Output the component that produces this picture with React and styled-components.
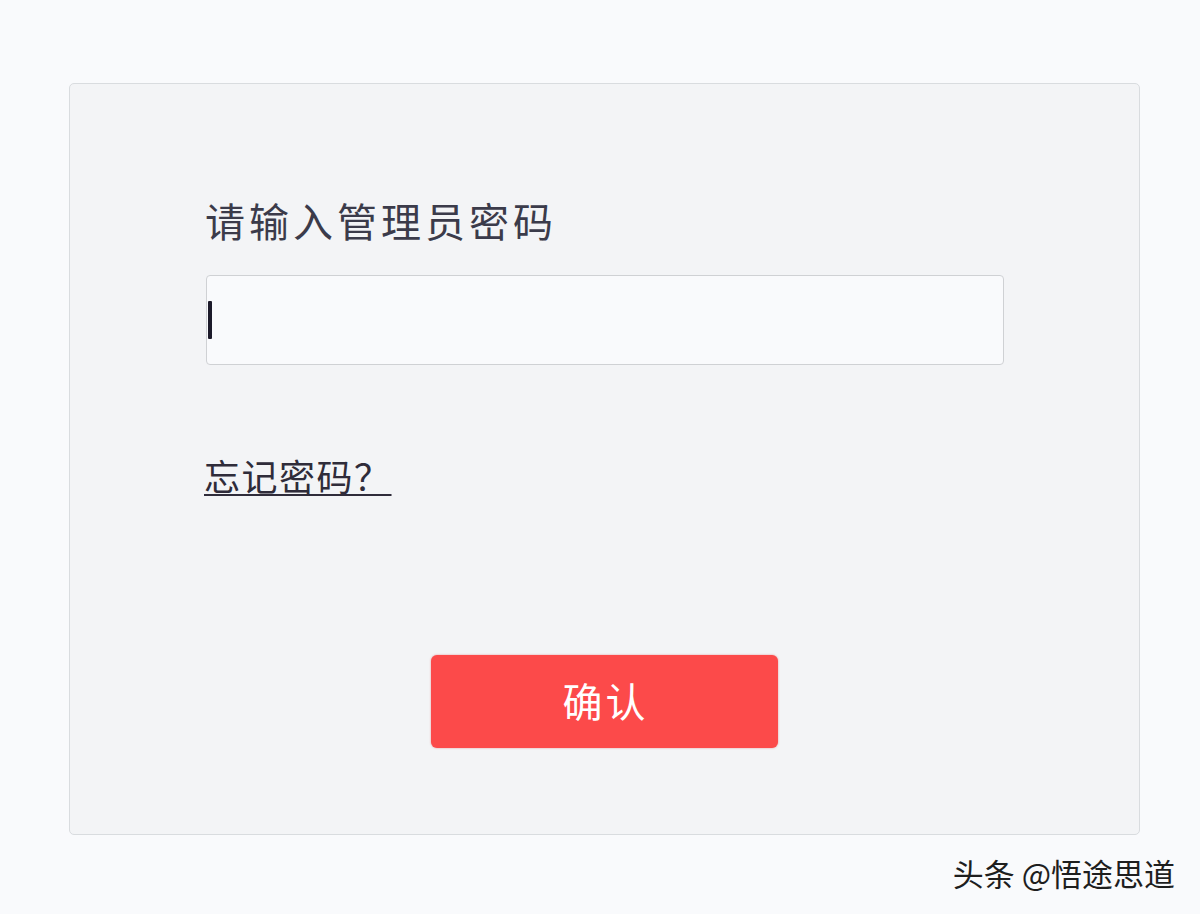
import styled, { createGlobalStyle } from 'styled-components'

const GlobalStyle = createGlobalStyle`
  html, body {
    margin: 0;
    padding: 0;
    background: #f9fafc;
    font-family: "Noto Sans CJK SC", "Liberation Sans", sans-serif;
  }
`

const Page = styled.div`
  width: 1200px;
  height: 914px;
  box-sizing: border-box;
  padding: 83px 60px 0 69px;
  display: flex;
  flex-direction: column;
`

const Card = styled.div`
  width: 1071px;
  height: 752px;
  box-sizing: border-box;
  background: #f3f4f6;
  border: 1px solid #d9dcdf;
  border-radius: 5px;
  padding: 112px 0 0 136px;
  display: flex;
  flex-direction: column;
`

const Label = styled.div`
  font-size: 40px;
  line-height: 48px;
  letter-spacing: 4px;
  color: #3b3b4a;
  height: 48px;
  margin-left: -1px;
`

const InputBox = styled.div`
  margin-top: 31px;
  width: 798px;
  height: 90px;
  box-sizing: border-box;
  background: #f9fafc;
  border: 1px solid #cfd1d4;
  border-radius: 4px;
  display: flex;
  align-items: center;
  padding-left: 1px;
`

const Caret = styled.span`
  display: block;
  width: 4px;
  height: 38px;
  background: #1c1a2a;
  border-radius: 1px;
`

const ForgotLink = styled.a`
  margin-top: 88px;
  align-self: flex-start;
  font-size: 36px;
  line-height: 44px;
  color: #2f2c3a;
  text-decoration: underline;
  text-decoration-thickness: 2px;
  text-underline-offset: 3px;
  letter-spacing: 1.5px;
  margin-left: -2px;
  cursor: pointer;
`

const ButtonRow = styled.div`
  margin-top: 158px;
  margin-left: -136px;
  display: flex;
  justify-content: center;
`

const ConfirmButton = styled.button`
  width: 347px;
  height: 93px;
  border: none;
  border-radius: 6px;
  background: #fc4a4a;
  box-shadow: 0 0 2px rgba(220, 40, 40, 0.5);
  color: #fff;
  font-family: inherit;
  font-size: 40px;
  line-height: 1;
  letter-spacing: 3px;
  padding: 0 0 4px 3px;
  cursor: pointer;
  margin-left: -1px;
`

const Watermark = styled.div`
  align-self: flex-end;
  margin-top: 20px;
  margin-right: -35px;
  font-size: 31px;
  line-height: 36px;
  color: #1e1e1e;
`

export default function App() {
  return (
    <>
      <GlobalStyle />
      <Page>
        <Card>
          <Label>请输入管理员密码</Label>
          <InputBox>
            <Caret />
          </InputBox>
          <ForgotLink>忘记密码？</ForgotLink>
          <ButtonRow>
            <ConfirmButton>确认</ConfirmButton>
          </ButtonRow>
        </Card>
        <Watermark>头条 @悟途思道</Watermark>
      </Page>
    </>
  )
}
